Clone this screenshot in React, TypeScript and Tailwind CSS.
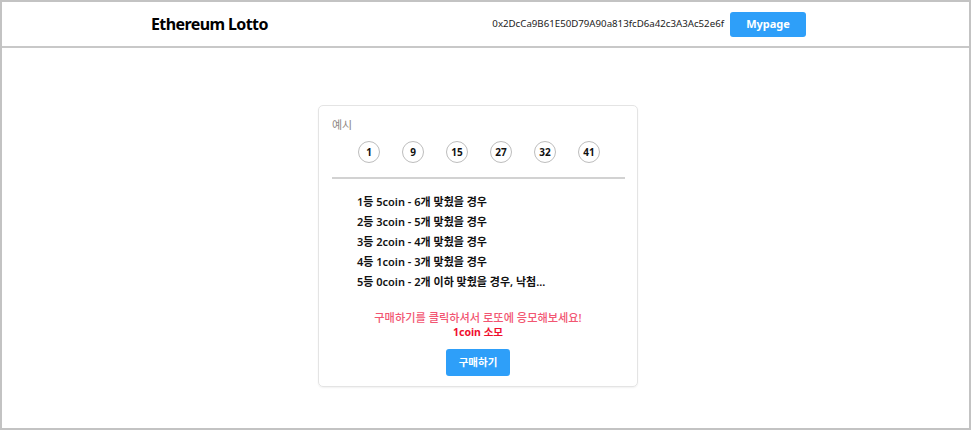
import React from "react";

const font = { fontFamily: '"Segoe UI", "Noto Sans", "Noto Sans CJK KR", sans-serif' };

export default function App() {
  const nums = [1, 9, 15, 27, 32, 41];
  const rules = [
    "1등 5coin - 6개 맞췄을 경우",
    "2등 3coin - 5개 맞췄을 경우",
    "3등 2coin - 4개 맞췄을 경우",
    "4등 1coin - 3개 맞췄을 경우",
    "5등 0coin - 2개 이하 맞췄을 경우, 낙첨...",
  ];
  return (
    <div
      className="w-[971px] h-[430px] bg-white border-2 border-[#c3c3c3] flex flex-col text-black"
      style={font}
    >
      <header className="h-[46px] border-b-2 border-[#c8c8c8] flex items-center shrink-0">
        <div className="w-[149px]" />
        <h1 className="text-[16px] font-bold tracking-[-0.6px] leading-none">Ethereum Lotto</h1>
        <div className="flex-1" />
        <span className="text-[9.7px] text-[#222] mr-[6px]">0x2DcCa9B61E50D79A90a813fcD6a42c3A3Ac52e6f</span>
        <button className="w-[76px] h-[25px] rounded-[3px] bg-[#2e9ff9] text-white text-[11px] font-bold mr-[163px]">
          Mypage
        </button>
      </header>
      <main className="flex-1 flex justify-center pt-[57px] pr-[15px]">
        <div className="w-[320px] h-[282px] border border-[#e4e4e4] rounded-[5px] shadow-[0_1px_2px_rgba(0,0,0,0.06)] px-[13px] pt-[12px] flex flex-col">
          <div className="text-[11px] text-[#8d8682] leading-[14px]">예시</div>
          <div className="flex gap-[22px] pl-[26px] mt-[9px]">
            {nums.map((n) => (
              <div
                key={n}
                className="w-[22px] h-[22px] rounded-full border border-[#bdbdbd] flex items-center justify-center text-[10px] font-bold text-[#111]"
              >
                {n}
              </div>
            ))}
          </div>
          <div className="mt-[14px] h-[2px] bg-[#d2d2d2] mr-[-1px]" />
          <div className="pl-[25px] mt-[13px] flex flex-col">
            {rules.map((r) => (
              <div key={r} className="text-[11px] font-semibold leading-[20px] text-[#111]">
                {r}
              </div>
            ))}
          </div>
          <div className="mt-[18px] text-center text-[11.2px] text-[#f25672] leading-[16px] font-medium">
            구매하기를 클릭하셔서 로또에 응모해보세요!
          </div>
          <div className="text-center text-[10.5px] font-bold text-[#f0102f] leading-[13px]">1coin 소모</div>
          <div className="flex justify-center mt-[10px]">
            <button className="w-[64px] h-[27px] rounded-[3px] bg-[#2e9ff9] text-white text-[10.5px] font-semibold">
              구매하기
            </button>
          </div>
        </div>
      </main>
    </div>
  );
}
